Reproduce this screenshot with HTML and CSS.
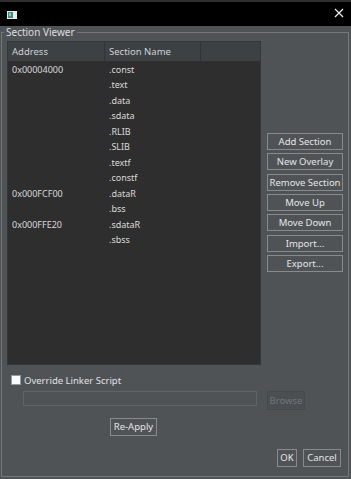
FILE: index.html
```html
<!DOCTYPE html>
<html>
<head>
<meta charset="utf-8">
<link rel="stylesheet" href="styles.css">
</head>
<body>
<div class="topstrip"></div>
<div class="titlebar">
  <svg class="appicon" width="10" height="8" viewBox="0 0 10 8">
    <rect x="0" y="0" width="10" height="8" fill="#e8eef0"/>
    <rect x="1" y="1" width="5" height="6" fill="#3f8f86"/>
    <rect x="2" y="2" width="2" height="3" fill="#8fc7c0"/>
  </svg>
  <svg class="close" width="10" height="10" viewBox="0 0 10 10">
    <path d="M1 1 L9 9 M9 1 L1 9" stroke="#f0f0f0" stroke-width="1.2" fill="none"/>
  </svg>
</div>
<fieldset class="group">
  <legend>Section Viewer</legend>
  <div class="main">
    <div class="table">
      <div class="thead">
        <div class="th c1">Address</div>
        <div class="th c2">Section Name</div>
        <div class="th c3"></div>
      </div>
      <div class="tbody">
        <div class="tr"><span class="c1">0x00004000</span><span class="c2">.const</span></div>
        <div class="tr"><span class="c1"></span><span class="c2">.text</span></div>
        <div class="tr"><span class="c1"></span><span class="c2">.data</span></div>
        <div class="tr"><span class="c1"></span><span class="c2">.sdata</span></div>
        <div class="tr"><span class="c1"></span><span class="c2">.RLIB</span></div>
        <div class="tr"><span class="c1"></span><span class="c2">.SLIB</span></div>
        <div class="tr"><span class="c1"></span><span class="c2">.textf</span></div>
        <div class="tr"><span class="c1"></span><span class="c2">.constf</span></div>
        <div class="tr"><span class="c1">0x000FCF00</span><span class="c2">.dataR</span></div>
        <div class="tr"><span class="c1"></span><span class="c2">.bss</span></div>
        <div class="tr"><span class="c1">0x000FFE20</span><span class="c2">.sdataR</span></div>
        <div class="tr"><span class="c1"></span><span class="c2">.sbss</span></div>
      </div>
    </div>
    <div class="buttons">
      <div class="btn">Add Section</div>
      <div class="btn">New Overlay</div>
      <div class="btn">Remove Section</div>
      <div class="btn">Move Up</div>
      <div class="btn">Move Down</div>
      <div class="btn">Import...</div>
      <div class="btn">Export...</div>
    </div>
  </div>
  <div class="checkrow">
    <span class="checkbox"></span>
    <span class="checklabel">Override Linker Script</span>
  </div>
  <div class="pathrow">
    <div class="pathfield"></div>
    <div class="btn browse">Browse</div>
  </div>
  <div class="applyrow">
    <div class="btn reapply">Re-Apply</div>
  </div>
  <div class="okrow">
    <div class="btn ok">OK</div>
    <div class="btn cancel">Cancel</div>
  </div>
</fieldset>
</body>
</html>
```
FILE: styles.css
```css
html, body {
  margin: 0;
  padding: 0;
}
body {
  width: 351px;
  height: 479px;
  overflow: hidden;
  background: #4f5356;
  font-family: "Noto Sans", "Open Sans", sans-serif;
  font-size: 9px;
  color: #d6d8d9;
}
.topstrip {
  height: 2px;
  background: #2c2e30;
}
.titlebar {
  height: 24px;
  background: #000;
  display: flex;
  align-items: center;
  justify-content: space-between;
  padding: 0 7px 0 7px;
}
.appicon {
  margin-top: 1px;
}
.close {
  margin-top: -2px;
}
.group {
  margin: 0 2px 0 1px;
  padding: 2px 0 0 5px;
  border: 1px solid #74787b;
  height: 451px;
  box-sizing: border-box;
  display: flex;
  flex-direction: column;
  min-width: 0;
}
.group legend {
  padding: 0 2px;
  margin-left: -3px;
  line-height: 13px;
  font-size: 10px;
  color: #dcdedf;
}
.main {
  display: flex;
}
.table {
  width: 254px;
  height: 324px;
  background: #2e2e2e;
  border: 1px solid #35383a;
  box-sizing: border-box;
  display: flex;
  flex-direction: column;
}
.thead {
  height: 19px;
  background: #3c4144;
  display: flex;
  flex-shrink: 0;
}
.th {
  line-height: 19px;
  font-size: 9.5px;
  color: #cfd2d4;
  border-right: 1px solid #30343a;
  box-sizing: border-box;
}
.c1 {
  width: 97px;
  padding-left: 4px;
  box-sizing: border-box;
  flex-shrink: 0;
}
.c2 {
  width: 96px;
  padding-left: 4px;
  box-sizing: border-box;
  flex-shrink: 0;
}
.th.c3 {
  flex: 1;
  border-right: none;
}
.tbody {
  padding-top: 0.5px;
}
.tr {
  display: flex;
  height: 15.5px;
  line-height: 15.5px;
  color: #dadada;
}
.buttons {
  margin-left: 6px;
  margin-top: 92px;
  display: flex;
  flex-direction: column;
  gap: 3.33px;
}
.btn {
  border: 1px solid #878b8e;
  box-sizing: border-box;
  text-align: center;
  color: #e4e6e7;
  font-size: 9.5px;
}
.buttons .btn {
  width: 76px;
  height: 17px;
  line-height: 15px;
}
.checkrow {
  display: flex;
  align-items: center;
  margin-top: 9px;
  margin-left: 4px;
  height: 12px;
}
.checkbox {
  width: 10px;
  height: 10px;
  background: #fbfbfb;
  border: 1px solid #9a9a9a;
  box-sizing: border-box;
}
.checklabel {
  margin-left: 3px;
  font-size: 9.5px;
  color: #e0e2e3;
}
.pathrow {
  display: flex;
  margin-top: 5px;
  margin-left: 16px;
  align-items: flex-start;
}
.pathfield {
  width: 234px;
  height: 15px;
  border: 1px solid #5f6467;
  box-sizing: border-box;
}
.browse {
  margin-left: 10px;
  width: 38px;
  height: 19px;
  line-height: 17px;
  border-color: #46494c;
  background: #4b4f52;
  color: #70757a;
}
.applyrow {
  display: flex;
  margin-top: 8px;
  margin-left: 103px;
}
.reapply {
  width: 47px;
  height: 18px;
  line-height: 16px;
}
.okrow {
  display: flex;
  justify-content: flex-end;
  gap: 6px;
  margin-top: 13px;
  margin-right: 7px;
}
.ok {
  width: 20px;
  height: 18px;
  line-height: 16px;
}
.cancel {
  width: 38px;
  height: 18px;
  line-height: 16px;
}
```
